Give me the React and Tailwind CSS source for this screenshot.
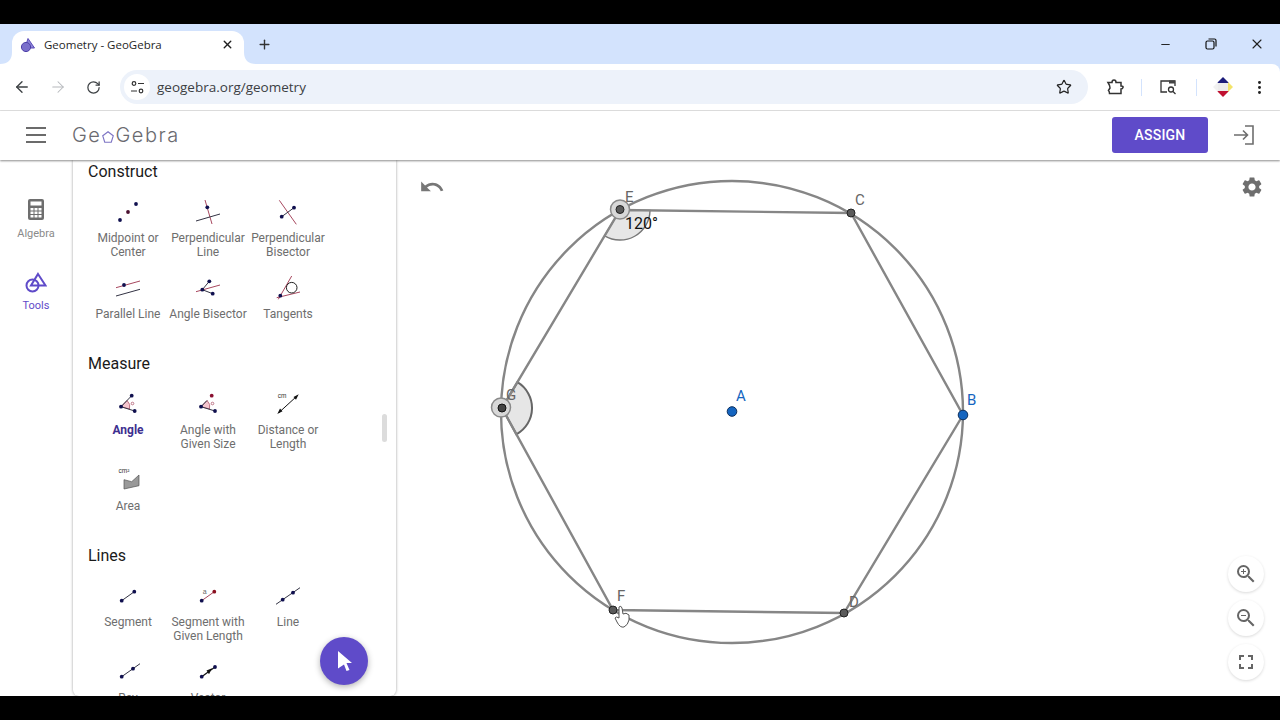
import { ArrowLeft, ArrowRight, Minus, MoreVertical, Plus, RotateCw, Star, X } from 'lucide-react'
import { MdFullscreen, MdSettings, MdUndo, MdZoomIn, MdZoomOut } from 'react-icons/md'

const NAVY = '#10104f'
const RED = '#a8485f'
const DARK = '#333344'

function Dot({ x, y, c = NAVY, r = 1.9 }) {
  return <circle cx={x} cy={y} r={r} fill={c} />
}

function L({ d, c = DARK, w = 1 }) {
  return <path d={d} stroke={c} strokeWidth={w} fill="none" />
}

function Wedge() {
  return (
    <>
      <path d="M9 18.7L15 12.5Q19 16 17.5 21Z" fill="#f6c6cf" stroke={RED} strokeWidth="0.7" />
      <circle cx="20.5" cy="15.5" r="1.3" fill="none" stroke={RED} strokeWidth="0.7" />
    </>
  )
}

const sections = [
  {
    title: 'Construct',
    spacing: 'mb-[5.5px]',
    tools: [
      { label: ['Midpoint or', 'Center'], icon: <><Dot x={8} y={24} /><Dot x={16} y={16} c="#4a1030" /><Dot x={24} y={8} /></> },
      { label: ['Perpendicular', 'Line'], icon: <><L d="M13 4L20 28" c={RED} /><L d="M4 25L28 18" /><Dot x={15.3} y={11.3} /></> },
      { label: ['Perpendicular', 'Bisector'], icon: <><L d="M7.3 4.3L24.3 28.3" c={RED} /><L d="M9.7 20.7L22 11.7" /><Dot x={9.7} y={20.7} /><Dot x={22} y={11.7} /></> },
      { label: ['Parallel Line'], icon: <><L d="M4 15.7L28 9" c={RED} /><L d="M4 24L28 17.3" /><Dot x={12} y={13} /></> },
      { label: ['Angle Bisector'], icon: <><L d="M4 19.7L28 13" c={RED} /><L d="M17.3 9.3L10.3 17.7L20.7 21.7" /><Dot x={10.3} y={17.7} /><Dot x={17.3} y={9.3} /><Dot x={20.7} y={21.7} /></> },
      { label: ['Tangents'], icon: <><L d="M19.7 4L6.3 27.3" c={RED} /><L d="M4.7 25.7L28 20" c={RED} /><circle cx="19.7" cy="15.7" r="5.3" fill="none" stroke="#222" strokeWidth="1" /><Dot x={8.3} y={23.7} /></> },
    ],
  },
  {
    title: 'Measure',
    spacing: 'mb-[6.5px]',
    tools: [
      { label: ['Angle'], active: true, icon: <><Wedge /><L d="M19.7 7.7L9 18.7L22.7 23" /><Dot x={19.7} y={7.7} /><Dot x={9} y={18.7} /><Dot x={22.7} y={23} /></> },
      { label: ['Angle with', 'Given Size'], icon: <><Wedge /><L d="M15 12.5L9 18.7L23 23" /><Dot x={19.7} y={7.7} c="#8a1030" /><Dot x={9} y={18.7} /><Dot x={23} y={23} /></> },
      {
        label: ['Distance or', 'Length'],
        icon: (
          <>
            <L d="M7 24.5L25 8" c="#111" />
            <path d="M5.3 26L8 20.5L10.5 23.3ZM26.7 6.3L24 11.8L21.5 9Z" fill="#111" />
            <text x="10" y="10" fontSize="6.5" textAnchor="middle" fill="#333" className="font-['Liberation_Sans']">cm</text>
          </>
        ),
      },
      {
        label: ['Area'],
        icon: (
          <>
            <path d="M12 15.7L19.7 17.7L27 11V21.7L12 25Z" fill="#999" stroke="#555" strokeWidth="0.7" />
            <text x="12" y="9" fontSize="6.5" textAnchor="middle" fill="#333" className="font-['Liberation_Sans']">cm²</text>
          </>
        ),
      },
    ],
  },
  {
    title: 'Lines',
    spacing: 'mb-[5.5px]',
    tools: [
      { label: ['Segment'], icon: <><L d="M9.7 20.7L22.3 11.7" /><Dot x={9.7} y={20.7} /><Dot x={22.3} y={11.7} /></> },
      {
        label: ['Segment with', 'Given Length'],
        icon: (
          <>
            <L d="M9.7 20.7L22.3 11.7" c={RED} />
            <Dot x={9.7} y={20.7} />
            <Dot x={22.3} y={11.7} c="#8a1020" />
            <text x="12.7" y="14" fontSize="7" textAnchor="middle" fill="#666" className="font-['Liberation_Sans']">a</text>
          </>
        ),
      },
      { label: ['Line'], icon: <><L d="M4 24.3L28 7.7" /><Dot x={10.7} y={19.7} /><Dot x={21} y={12.7} /></> },
      { label: ['Ray'], icon: <><L d="M9.7 20.7L28 7.7" /><Dot x={9.7} y={20.7} /><Dot x={21} y={12.7} /></> },
      {
        label: ['Vector'],
        icon: (
          <>
            <L d="M9.7 20.7L23 11" c="#111" w={1.2} />
            <path d="M20 12.2L14.5 14.5L17 18.2Z" fill="#111" />
            <Dot x={9.7} y={20.7} />
            <Dot x={23} y={11} />
          </>
        ),
      },
    ],
  },
]

function ToolGrid({ tools }) {
  return (
    <div className="grid grid-cols-[repeat(3,80px)]">
      {tools.map((tool) => (
        <div key={tool.label[0]} className="flex h-[76px] flex-col items-center">
          <svg width="32" height="32" viewBox="0 0 32 32" className="mb-[3px] shrink-0">
            {tool.icon}
          </svg>
          <div className={`text-center text-xs leading-[14px] ${tool.active ? 'font-bold text-[#3d2f8f]' : 'text-[#6e6e6e]'}`}>
            {tool.label.map((line) => (
              <div key={line} className="whitespace-nowrap">{line}</div>
            ))}
          </div>
        </div>
      ))}
    </div>
  )
}

function TabBar() {
  return (
    <div className="flex h-10 shrink-0 items-end bg-[#d3e3fd] pl-3 font-['Open_Sans',sans-serif] text-[#1f1f1f]">
      <div className="relative flex h-[33px] w-[232px] items-center rounded-t-xl bg-white pb-[6px] pl-[7px] pr-[10px]">
        <svg width="12" height="12" viewBox="0 0 12 12" className="absolute -left-3 bottom-0">
          <path d="M12 0V12H0Q12 12 12 0Z" fill="#fff" />
        </svg>
        <svg width="12" height="12" viewBox="0 0 12 12" className="absolute -right-3 bottom-0">
          <path d="M0 0V12H12Q0 12 0 0Z" fill="#fff" />
        </svg>
        <svg width="18" height="18" viewBox="0 0 18 18" className="shrink-0">
          <path d="M9 2.500L15.500 12H6Z" fill="#8f86d8" stroke="#5a4bb8" strokeWidth="1" />
          <circle cx="7" cy="11" r="4.600" fill="#7a6fcb" stroke="#4d3fa8" strokeWidth="1" />
        </svg>
        <span className="ml-[7px] flex-1 text-[11.5px]">Geometry - GeoGebra</span>
        <X size={13} strokeWidth={2.6} />
      </div>
      <div className="flex h-[40px] w-10 items-center justify-center">
        <Plus size={15} strokeWidth={2.2} className="text-[#333]" />
      </div>
      <div className="flex-1" />
      <div className="flex h-10 items-center">
        <div className="flex w-[46px] justify-center"><Minus size={13} strokeWidth={1.8} /></div>
        <div className="flex w-[46px] justify-center">
          <svg width="12" height="12" viewBox="0 0 12 12" fill="none" stroke="#111" strokeWidth="1.2">
            <rect x="1" y="3" width="8" height="8" rx="1.5" />
            <path d="M3.5 1H9.5A1.5 1.5 0 0 1 11 2.500V8.500" />
          </svg>
        </div>
        <div className="flex w-[46px] justify-center"><X size={16} strokeWidth={1.6} /></div>
      </div>
    </div>
  )
}

function AddressBar() {
  return (
    <div className="shrink-0 bg-[#d3e3fd]">
      <div className="flex h-[47px] items-center rounded-tr-lg border-b border-[#e3e3e3] bg-white font-['Open_Sans',sans-serif] text-[#3c4043]">
        <div className="flex w-[120px] items-center pl-[13px]">
          <ArrowLeft size={18} strokeWidth={1.8} />
          <ArrowRight size={18} strokeWidth={1.4} className="ml-[18px] text-[#b5b8bc]" />
          <RotateCw size={15} strokeWidth={2} className="ml-[19px]" />
        </div>
        <div className="flex h-[34px] w-[968px] items-center rounded-full bg-[#edf2fa] pl-[4px] pr-[16px]">
          <div className="flex h-[26px] w-[26px] items-center justify-center rounded-full bg-white">
            <svg width="15" height="15" viewBox="0 0 15 15" fill="none" stroke="#333" strokeWidth="1.2">
              <circle cx="4" cy="3.500" r="1.800" />
              <path d="M8 3.500H14M1 11H7" />
              <circle cx="11" cy="11" r="1.800" />
            </svg>
          </div>
          <span className="ml-[7px] flex-1 text-[13.5px]">geogebra.org/geometry</span>
          <Star size={16} strokeWidth={1.8} className="text-[#222]" />
        </div>
        <div className="flex flex-1 items-center pl-[18px]">
          <svg width="18" height="18" viewBox="0 0 18 18" fill="none" stroke="#333" strokeWidth="1.500">
            <path d="M2 4.500H6Q6 2 8 2T10 4.500H15V8Q17.500 8 17 9.500T15 11V15.500H3.500Q3.500 13.500 2.500 12.500L4 10Q4 7.500 2 4.500Z" />
          </svg>
          <div className="ml-[17px] h-[17px] w-px bg-[#d3e3fd]" />
          <svg width="18" height="16" viewBox="0 0 18 16" fill="none" stroke="#333" strokeWidth="1.300" className="ml-[17px]">
            <path d="M8 13H2V2H16V7" />
            <rect x="10" y="1.500" width="6" height="3" fill="#444" stroke="none" />
            <circle cx="12" cy="10.500" r="2.500" />
            <path d="M14 12.500L16.500 15" />
          </svg>
          <div className="ml-[19px] h-[17px] w-px bg-[#d3e3fd]" />
          <svg width="20" height="20" viewBox="0 0 20 20" className="ml-[16px]">
            <path d="M10 0L16 6H4Z" fill="#1c1c7a" />
            <path d="M10 20L16 14H4Z" fill="#c01030" />
            <path d="M20 10L15 5V15Z" fill="#f3e46a" />
            <path d="M0 10L5 5V15Z" fill="#f1f1f1" />
            <rect x="5" y="6" width="10" height="8" fill="#ececec" />
          </svg>
          <MoreVertical size={17} strokeWidth={2.2} className="ml-[18px] text-[#222]" />
        </div>
      </div>
    </div>
  )
}

function AppHeader() {
  return (
    <div className="relative z-10 flex h-[49px] shrink-0 items-center bg-white pb-px pl-[26px] pr-[25px] shadow-[0_1px_2px_rgba(0,0,0,0.45)]">
      <div className="flex w-5 flex-col gap-[5px]">
        <div className="h-[2px] bg-[#6b6b6b]" />
        <div className="h-[2px] bg-[#6b6b6b]" />
        <div className="h-[2px] bg-[#6b6b6b]" />
      </div>
      <div className="ml-[26px] flex items-center font-['Inter',sans-serif] text-[20px] font-light tracking-[1.5px] text-[#6a6a6f]">
        Ge
        <svg width="14" height="14" viewBox="0 0 12 12" className="mt-1">
          <path d="M6 1.500L10.500 5L8.800 10.500H3.200L1.500 5Z" fill="none" stroke="#7d74c4" strokeWidth="1" />
        </svg>
        Gebra
      </div>
      <div className="flex-1" />
      <div className="flex h-9 w-24 items-center justify-center rounded-[3px] bg-[#5f4bc9] font-['Roboto',sans-serif] text-sm font-medium tracking-[0.2px] text-white">
        ASSIGN
      </div>
      <svg width="22" height="20" viewBox="0 0 22 20" fill="none" stroke="#6e6e6e" strokeWidth="1.600" className="ml-[25px]">
        <path d="M12 1H20V19H12" />
        <path d="M1 10H14M10 5.500L14.500 10L10 14.500" />
      </svg>
    </div>
  )
}

function Rail() {
  return (
    <div className="flex w-[73px] shrink-0 flex-col items-center pr-px pt-[39px] text-[11px] leading-[14px]">
      <svg width="16" height="21" viewBox="0 0 16 21">
        <rect width="16" height="21" rx="2" fill="#6e6e6e" />
        <rect x="2.500" y="2.500" width="11" height="4" fill="#fff" />
        {[9, 12.500, 16].map((y) =>
          [2.500, 6.500, 10.500].map((x) => <rect key={`${x}-${y}`} x={x} y={y} width="3" height="2.500" fill="#fff" />)
        )}
      </svg>
      <span className="mt-[7px] text-[#8a8a8a]">Algebra</span>
      <svg width="22" height="22" viewBox="0 0 22 22" fill="none" stroke="#5f4bc9" strokeWidth="2" className="mt-[31px]">
        <path d="M13 2L20.500 13.500H6Z" />
        <circle cx="7.500" cy="13.500" r="6" />
      </svg>
      <span className="mt-[5px] text-[#5f4bc9]">Tools</span>
    </div>
  )
}

function ToolPanel() {
  return (
    <div className="relative w-[323px] shrink-0 overflow-hidden rounded-b-md bg-white shadow-[0_0_3px_rgba(0,0,0,0.4)]">
      <div className="pl-[15px] pt-[2px]">
        {sections.map((section) => (
          <div key={section.title} className={section.spacing}>
            <h2 className="mb-[14px] text-base leading-5 text-[#1a1a1a]">{section.title}</h2>
            <ToolGrid tools={section.tools} />
          </div>
        ))}
      </div>
      <div className="absolute left-[309px] top-[254px] h-7 w-[5px] rounded-full bg-[#dcdcdc]" />
      <div className="absolute left-[247px] top-[477px] flex h-12 w-12 items-center justify-center rounded-full bg-[#5f4bc9] shadow-[0_2px_6px_rgba(0,0,0,0.3)]">
        <svg width="16" height="22" viewBox="0 0 16 22" className="ml-[2px]">
          <path d="M1 1L15 13H9.500L12.500 20L9.500 21L7 14.500L1 18.500Z" fill="#fff" />
        </svg>
      </div>
    </div>
  )
}

function Construction() {
  const line = { stroke: '#868686', strokeWidth: 2.4, fill: 'none' }
  const text = { fontSize: 15, fill: '#666', className: "font-['Roboto',sans-serif]" }
  return (
    <svg viewBox="396 160 884 536" className="absolute inset-0 h-full w-full">
      <path d="M620 210L650 210.400A30 30 0 0 1 604.600 235.800Z" fill="#e6e6e6" stroke="#777" strokeWidth="1.400" />
      <path d="M502 408L517.400 382.200A30 30 0 0 1 516.400 434.300Z" fill="#e6e6e6" stroke="#666" strokeWidth="2" />
      <circle cx="732" cy="412" r="231" {...line} />
      <path d="M620 210L851 213L963 415L844 613L613 610L502 408Z" {...line} />

      <circle cx="620" cy="209.500" r="9.500" fill="#d8d8d8" stroke="#8a8a8a" strokeWidth="1.500" />
      <circle cx="501" cy="407.500" r="9.500" fill="#d8d8d8" stroke="#8a8a8a" strokeWidth="1.500" />
      <circle cx="620" cy="209.500" r="4" fill="#5a5a5a" stroke="#222" />
      <circle cx="502" cy="408" r="4" fill="#444" stroke="#111" />
      <circle cx="851" cy="213" r="4" fill="#5a5a5a" stroke="#222" />
      <circle cx="844" cy="613" r="4" fill="#5a5a5a" stroke="#222" />
      <circle cx="613" cy="610" r="4" fill="#5a5a5a" stroke="#222" />
      <circle cx="732" cy="411.500" r="4.800" fill="#1565c0" stroke="#0d2f5e" />
      <circle cx="963" cy="415" r="4.800" fill="#1565c0" stroke="#0d2f5e" />

      <text x="625" y="202" {...text}>E</text>
      <text x="855" y="205" {...text}>C</text>
      <text x="849" y="607" {...text}>D</text>
      <text x="617" y="601" {...text}>F</text>
      <text x="506" y="400" {...text}>G</text>
      <text x="736" y="401" {...text} fill="#1565c0">A</text>
      <text x="967" y="405" {...text} fill="#1565c0">B</text>
      <text x="625" y="229" fontSize="16" fill="#111" className="font-['Roboto',sans-serif]">120°</text>

      <path
        d="M619 607Q621 605 622 608L623 614Q626 612 629 615V620Q628 625 624 627Q620 628 617 622L615 618Q616 616 619 618Z"
        fill="#fff"
        stroke="#555"
        strokeWidth="1"
      />
    </svg>
  )
}

function ZoomButton({ icon: Icon, size = 24 }) {
  return (
    <div className="flex h-9 w-9 items-center justify-center rounded-full bg-white shadow-[0_1px_3px_rgba(0,0,0,0.15)]">
      <Icon size={size} className="text-[#666]" />
    </div>
  )
}

export default function App() {
  return (
    <div className="flex h-[720px] w-[1280px] flex-col overflow-hidden bg-black font-['Roboto',sans-serif]">
      <div className="h-6 shrink-0" />
      <TabBar />
      <AddressBar />
      <AppHeader />
      <div className="flex min-h-0 flex-1 bg-white">
        <Rail />
        <ToolPanel />
        <div className="relative flex-1">
          <Construction />
          <MdUndo size={26} className="absolute left-[23px] top-[14px] text-[#777]" />
          <MdSettings size={24} className="absolute right-[16px] top-[15px] text-[#6e6e6e]" />
          <div className="absolute bottom-[16px] right-[16px] flex flex-col gap-2">
            <ZoomButton icon={MdZoomIn} />
            <ZoomButton icon={MdZoomOut} />
            <ZoomButton icon={MdFullscreen} />
          </div>
        </div>
      </div>
      <div className="h-6 shrink-0" />
    </div>
  )
}
